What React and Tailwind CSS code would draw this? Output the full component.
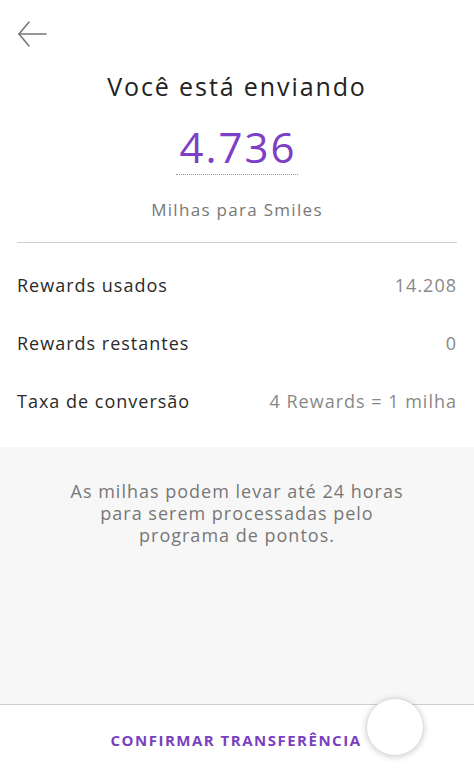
export default function App() {
  const font = { fontFamily: '"Open Sans", "Noto Sans", sans-serif' };
  return (
    <div className="w-[474px] h-[775px] bg-white flex flex-col overflow-hidden relative" style={font}>
      <div className="pt-[20px] pl-[17px] h-[50px]">
        <svg width="30" height="28" viewBox="0 0 30 28" fill="none" stroke="#777" strokeWidth="1.6" strokeLinecap="round" strokeLinejoin="round">
          <path d="M29 14H2" />
          <path d="M12 2L2 14l10 12" />
        </svg>
      </div>
      <div className="flex flex-col items-center">
        <div className="mt-[20px] text-[25px] leading-[32px] text-[#222] tracking-[1.9px]">Você está enviando</div>
        <div className="mt-[22px] text-[42px] leading-[46px] text-[#7c3fc6] tracking-[2px] border-b border-dotted border-[#999] pl-[3px] pr-[1px] pb-[4px]">4.736</div>
        <div className="mt-[24px] text-[17px] leading-[22px] text-[#777] tracking-[1.3px]">Milhas para Smiles</div>
      </div>
      <div className="mx-[17px] mt-[21px] h-px bg-[#cfcfcf]" />
      <div className="px-[17px] flex flex-col text-[18px] leading-[24px] tracking-[1px]">
        <div className="flex justify-between items-center h-[58px] mt-[13px]">
          <span className="text-[#2a2a2a]">Rewards usados</span>
          <span className="text-[#888]">14.208</span>
        </div>
        <div className="flex justify-between items-center h-[58px]">
          <span className="text-[#2a2a2a]">Rewards restantes</span>
          <span className="text-[#888]">0</span>
        </div>
        <div className="flex justify-between items-center h-[58px]">
          <span className="text-[#2a2a2a]">Taxa de conversão</span>
          <span className="text-[#888]">4 Rewards = 1 milha</span>
        </div>
      </div>
      <div className="mt-[17px] h-[258px] bg-[#f7f7f7] border-b border-[#cfcfcf] flex flex-col items-center pt-[33px]">
        <p className="text-center text-[18px] leading-[22px] text-[#777] tracking-[1px] w-[440px]">
          As milhas podem levar até 24 horas<br />para serem processadas pelo<br />programa de pontos.
        </p>
      </div>
      <div className="flex-1 flex items-center justify-center pr-[2px]">
        <span className="text-[15px] font-bold tracking-[1.5px] text-[#7a3fbf]">CONFIRMAR TRANSFERÊNCIA</span>
      </div>
      <div className="absolute left-[366px] top-[698px] w-[58px] h-[58px] rounded-full bg-white border border-[#ddd] shadow-[0_1px_6px_rgba(0,0,0,0.2)]" />
    </div>
  );
}
